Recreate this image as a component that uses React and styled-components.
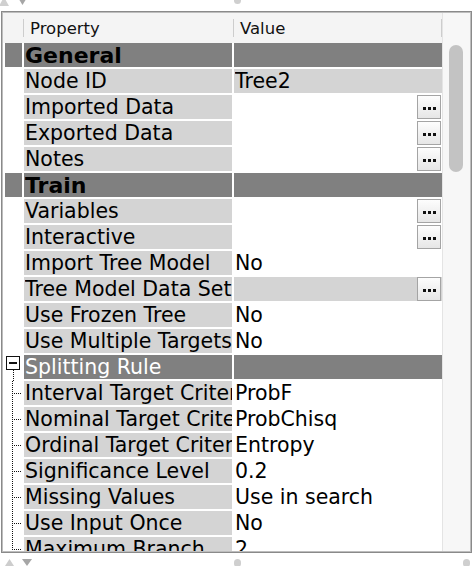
import React from "react";
import styled, { createGlobalStyle } from "styled-components";

const GlobalStyle = createGlobalStyle`
  html, body {
    margin: 0;
    padding: 0;
    background: #ffffff;
    overflow: hidden;
  }
  body {
    font-family: "DejaVu Sans", "Liberation Sans", sans-serif;
  }
`;

const Page = styled.div`
  width: 474px;
  height: 566px;
  display: flex;
  flex-direction: column;
  overflow: hidden;
  background: #ffffff;
`;

/* thin strips above and below the sheet, only the edges of their controls show */
const Strip = styled.div`
  height: ${(p) => p.$h}px;
  flex: 0 0 auto;
  display: flex;
  align-items: ${(p) => (p.$top ? "flex-start" : "flex-end")};
  overflow: hidden;
`;

const Arrows = styled.svg`
  width: 34px;
  height: ${(p) => p.$h}px;
  flex: 0 0 auto;
`;

const Handle = styled.div`
  width: 7px;
  height: 8px;
  border-radius: 4px;
  background: #cfcfcf;
  margin-left: ${(p) => p.$left}px;
  margin-top: ${(p) => (p.$top ? -4 : 0)}px;
  margin-bottom: ${(p) => (p.$top ? 0 : -1)}px;
  flex: 0 0 auto;
`;

const Frame = styled.div`
  box-sizing: border-box;
  margin-left: 1px;
  width: 471px;
  height: 542px;
  flex: 0 0 auto;
  border: 1px solid #8a8a8a;
  box-shadow: inset 0 0 0 1px #bdbdbd;
  padding: 1px;
  display: flex;
  overflow: hidden;
`;

const Table = styled.div`
  flex: 1;
  display: flex;
  flex-direction: column;
  overflow: hidden;
`;

const Header = styled.div`
  height: 30px;
  flex: 0 0 auto;
  display: grid;
  grid-template-columns: 21px 210px 1fr;
  background: #f4f4f4;
`;

const HeaderCell = styled.div`
  position: relative;
  display: flex;
  align-items: center;
  padding-left: ${(p) => p.$pad || 0}px;
  font-size: 16.5px;
  color: #111;
  white-space: nowrap;

  &::after {
    content: "";
    position: absolute;
    right: 0;
    top: 6px;
    bottom: 6px;
    width: 1px;
    background: #cdcdcd;
  }
`;

const Row = styled.div`
  height: 26px;
  flex: 0 0 auto;
  display: grid;
  grid-template-columns: 17px 208px 208px;
  column-gap: 2px;
  padding-left: 2px;
`;

const Indent = styled.div`
  height: ${(p) => (p.$dark ? 24 : 26)}px;
  background: ${(p) => (p.$dark ? "#808080" : "transparent")};
  display: flex;
  align-items: flex-start;
`;

/* dotted tree connector for child properties */
const Branch = styled.div`
  position: relative;
  width: 17px;
  height: 26px;

  &::before {
    content: "";
    position: absolute;
    left: 7px;
    top: 0;
    bottom: 0;
    width: 1px;
    background: repeating-linear-gradient(to bottom, #111 0 1px, transparent 1px 2px);
  }
  &::after {
    content: "";
    position: absolute;
    left: 9px;
    top: 12px;
    width: 8px;
    height: 1px;
    background: repeating-linear-gradient(to right, #111 0 1px, transparent 1px 2px);
  }
`;

const Toggle = styled.div`
  position: relative;
  box-sizing: border-box;
  width: 14px;
  height: 14px;
  margin: 1px 0 0 1px;
  border: 1px solid #111;
  background: #fff;
  display: flex;
  align-items: center;
  justify-content: center;

  &::before {
    content: "";
    width: 8px;
    height: 2px;
    background: #111;
  }
  &::after {
    content: "";
    position: absolute;
    left: 6px;
    top: 13px;
    width: 1px;
    height: 12px;
    background: repeating-linear-gradient(to bottom, #111 0 1px, transparent 1px 2px);
  }
`;

const Cell = styled.div`
  height: 24px;
  box-sizing: border-box;
  display: flex;
  align-items: center;
  padding-left: 1px;
  overflow: hidden;
  white-space: nowrap;
  font-size: ${(p) => (p.$bold ? 22 : 20.5)}px;
  font-weight: ${(p) => (p.$bold ? 700 : 400)};
  color: ${(p) => (p.$light ? "#ffffff" : "#000000")};
  background: ${(p) => p.$bg};
`;

const CellText = styled.span`
  flex: 1;
  overflow: hidden;
`;

const MoreButton = styled.div`
  box-sizing: border-box;
  width: 24px;
  height: 24px;
  margin-right: 1px;
  flex: 0 0 auto;
  border: 1px solid #a4a4a4;
  background: linear-gradient(#fdfdfd, #e6e6e6);
  display: flex;
  align-items: flex-end;
  justify-content: center;
  gap: 2px;
  padding-bottom: 8px;
`;

const Dot = styled.span`
  width: 3px;
  height: 3px;
  background: #111;
`;

const Scrollbar = styled.div`
  width: 28px;
  flex: 0 0 auto;
  box-sizing: border-box;
  border-left: 1px solid #e4e4e4;
  background: #f7f7f7;
  padding: 32px 0 0 6px;
`;

const Thumb = styled.div`
  width: 14px;
  height: 127px;
  border-radius: 7px;
  background: #c3c3c3;
`;

const DARK = "#808080";
const LIGHT = "#d4d4d4";

const rows = [
  { kind: "group", label: "General" },
  { label: "Node ID", value: "Tree2", shaded: true },
  { label: "Imported Data", button: true },
  { label: "Exported Data", button: true },
  { label: "Notes", button: true },
  { kind: "group", label: "Train" },
  { label: "Variables", button: true },
  { label: "Interactive", button: true },
  { label: "Import Tree Model", value: "No" },
  { label: "Tree Model Data Set", shaded: true, button: true },
  { label: "Use Frozen Tree", value: "No" },
  { label: "Use Multiple Targets", value: "No" },
  { kind: "sub", label: "Splitting Rule" },
  { label: "Interval Target Criterion", value: "ProbF", child: true },
  { label: "Nominal Target Criterion", value: "ProbChisq", child: true },
  { label: "Ordinal Target Criterion", value: "Entropy", child: true },
  { label: "Significance Level", value: "0.2", child: true },
  { label: "Missing Values", value: "Use in search", child: true },
  { label: "Use Input Once", value: "No", child: true },
  { label: "Maximum Branch", value: "2", child: true },
  { label: "Maximum Depth", value: "6", child: true },
];

const More = () => (
  <MoreButton>
    <Dot />
    <Dot />
    <Dot />
  </MoreButton>
);

const PropertyRow = ({ row }) => {
  if (row.kind === "group") {
    return (
      <Row>
        <Indent $dark />
        <Cell $bg={DARK} $bold>
          <CellText>{row.label}</CellText>
        </Cell>
        <Cell $bg={DARK} />
      </Row>
    );
  }
  if (row.kind === "sub") {
    return (
      <Row>
        <Indent>
          <Toggle />
        </Indent>
        <Cell $bg={DARK} $light>
          <CellText>{row.label}</CellText>
        </Cell>
        <Cell $bg={DARK} />
      </Row>
    );
  }
  return (
    <Row>
      <Indent>{row.child && <Branch />}</Indent>
      <Cell $bg={LIGHT}>
        <CellText>{row.label}</CellText>
      </Cell>
      <Cell $bg={row.shaded ? LIGHT : "#ffffff"}>
        <CellText>{row.value}</CellText>
        {row.button && <More />}
      </Cell>
    </Row>
  );
};

export default function App() {
  return (
    <Page>
      <GlobalStyle />
      <Strip $h={11} $top>
        <Arrows $h={11} viewBox="0 0 34 11">
          <polygon points="-1,6 9,6 4,-3" fill="#d0d0d0" />
          <polygon points="17,-4 28,-4 22.5,5" fill="#a6a6a6" />
        </Arrows>
        <Handle $top $left={200} />
      </Strip>
      <Frame>
        <Table>
          <Header>
            <HeaderCell />
            <HeaderCell $pad={6}>Property</HeaderCell>
            <HeaderCell $pad={6}>Value</HeaderCell>
          </Header>
          {rows.map((row) => (
            <PropertyRow key={row.label} row={row} />
          ))}
        </Table>
        <Scrollbar>
          <Thumb />
        </Scrollbar>
      </Frame>
      <Strip $h={13}>
        <Arrows $h={13} viewBox="0 0 34 13">
          <polygon points="5,13 14,13 9.5,6" fill="#cdcdcd" />
          <polygon points="22,6 32,6 27,13" fill="#a6a6a6" />
        </Arrows>
        <Handle $left={200} />
        <Handle $left={222} />
      </Strip>
    </Page>
  );
}
